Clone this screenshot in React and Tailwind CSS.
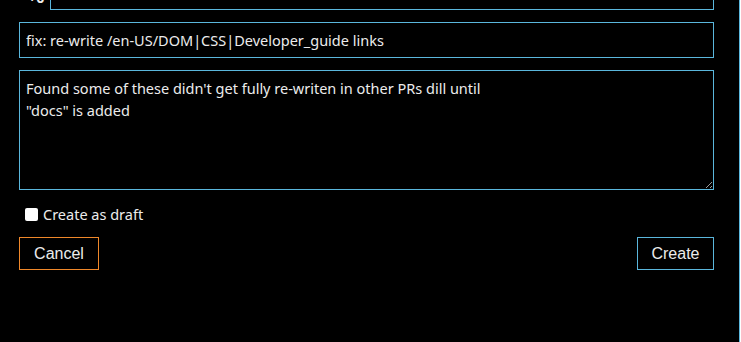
import { useState } from "react";

const App = () => {
  const [draft, setDraft] = useState(false);

  return (
    <div className="h-[342px] w-[740px] overflow-hidden border-r border-[#5ab6dc] bg-black pl-[19px] pr-[25px] text-[#ececec] font-['Noto_Sans',sans-serif]">
      {/* top row, mostly scrolled out of view */}
      <div className="mt-[-26px] flex h-[36px] items-end">
        <span className="w-[31px] pl-[9px] text-[14.5px] leading-[26px] font-bold">+0</span>
        <div className="h-[36px] flex-1 border border-[#5ab6dc]" />
      </div>

      <input
        className="mt-[12px] block h-[36px] w-full border border-[#5ab6dc] bg-black px-[6px] text-[14.5px] text-[#ececec] outline-none"
        defaultValue="fix: re-write /en-US/DOM|CSS|Developer_guide links"
      />

      <textarea
        className="mt-[12px] block h-[120px] w-full resize-y border border-[#5ab6dc] bg-black px-[6px] py-[6px] text-[14.5px] leading-[22px] text-[#ececec] outline-none"
        defaultValue={"Found some of these didn't get fully re-writen in other PRs dill until\n\"docs\" is added"}
      />

      <label className="mt-[14px] ml-[6px] flex items-center gap-[5px] text-[14.5px] leading-[20px]">
        <input
          type="checkbox"
          checked={draft}
          onChange={(e) => setDraft(e.target.checked)}
          className="h-[13px] w-[13px] appearance-none rounded-[2px] bg-white"
        />
        Create as draft
      </label>

      <div className="mt-[13px] flex justify-between font-['Liberation_Sans',Arial,sans-serif] text-[16px]">
        <button className="h-[33px] w-[80px] border border-[#f0882a] bg-black text-[#ececec]">
          Cancel
        </button>
        <button className="h-[33px] w-[77px] border border-[#5ab6dc] bg-black text-[#ececec]">
          Create
        </button>
      </div>
    </div>
  );
};

export default App;
